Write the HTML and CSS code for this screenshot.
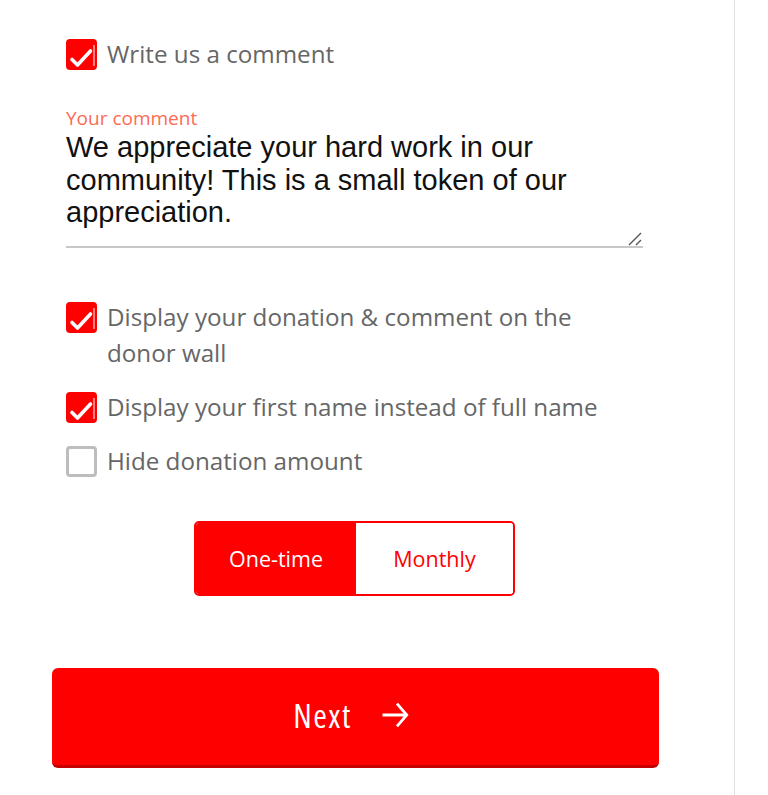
FILE: index.html
```html
<!DOCTYPE html>
<html>
<head>
<meta charset="utf-8">
<link rel="stylesheet" href="styles.css">
</head>
<body>
<div class="page">
  <div class="form">
    <label class="check-row first">
      <span class="box checked">
        <svg viewBox="0 0 30 30" width="30" height="30"><path d="M5 19.5 L10.5 25 L23.5 11" fill="none" stroke="#fff" stroke-width="3.6" stroke-linecap="round" stroke-linejoin="round"/><line x1="27" y1="5" x2="27" y2="26" stroke="#fff" stroke-width="1"/></svg>
      </span>
      <span class="text">Write us a comment</span>
    </label>

    <div class="comment">
      <div class="comment-label">Your comment</div>
      <div class="comment-field">
        <textarea class="comment-input">We appreciate your hard work in our community! This is a small token of our appreciation.</textarea>
        <svg class="grip" viewBox="0 0 16 16" width="16" height="16"><path d="M2 14 L14 2 M9 14 L14 9" fill="none" stroke="#555" stroke-width="1.4"/></svg>
      </div>
    </div>

    <div class="options">
      <label class="check-row">
        <span class="box checked">
          <svg viewBox="0 0 30 30" width="30" height="30"><path d="M5 19.5 L10.5 25 L23.5 11" fill="none" stroke="#fff" stroke-width="3.6" stroke-linecap="round" stroke-linejoin="round"/><line x1="27" y1="5" x2="27" y2="26" stroke="#fff" stroke-width="1"/></svg>
        </span>
        <span class="text">Display your donation &amp; comment on the donor wall</span>
      </label>
      <label class="check-row">
        <span class="box checked">
          <svg viewBox="0 0 30 30" width="30" height="30"><path d="M5 19.5 L10.5 25 L23.5 11" fill="none" stroke="#fff" stroke-width="3.6" stroke-linecap="round" stroke-linejoin="round"/><line x1="27" y1="5" x2="27" y2="26" stroke="#fff" stroke-width="1"/></svg>
        </span>
        <span class="text">Display your first name instead of full name</span>
      </label>
      <label class="check-row">
        <span class="box"></span>
        <span class="text">Hide donation amount</span>
      </label>
    </div>

    <div class="toggle-wrap">
      <div class="toggle">
        <button class="seg active">One-time</button>
        <button class="seg">Monthly</button>
      </div>
    </div>

    <button class="next">
      <span class="next-label">Next</span>
      <svg class="arrow" viewBox="0 0 30 30" width="30" height="30"><path d="M2 15 H26 M17 4 L26.5 15 L17 26" fill="none" stroke="#fff" stroke-width="3" stroke-linecap="square" stroke-linejoin="miter"/></svg>
    </button>
  </div>
</div>
</body>
</html>
```

FILE: styles.css
```css
* { box-sizing: border-box; }
html, body { margin: 0; padding: 0; background: #fff; }
body { width: 768px; height: 795px; overflow: hidden; }

.page {
  width: 735px;
  height: 795px;
  border-right: 1px solid #e2e2e2;
}

.form {
  width: 643px;
  padding: 36px 0 0 66px;
  font-family: "Open Sans", "Liberation Sans", sans-serif;
}

.check-row {
  display: flex;
  align-items: flex-start;
  gap: 10px;
  font-size: 24.2px;
  line-height: 36px;
  color: #666;
}

.box {
  flex: 0 0 31px;
  width: 31px;
  height: 31px;
  margin-top: 3px;
  border: 3px solid #bdbdbd;
  border-radius: 4px;
  background: #fff;
  display: flex;
  align-items: center;
  justify-content: center;
}
.box.checked {
  background: #ff0000;
  border: none;
}
.box svg { display: block; }

.text { flex: 1; }

.comment { margin-top: 35px; }
.comment-label {
  font-family: "Open Sans", "Liberation Sans", sans-serif;
  font-size: 19px;
  line-height: 22px;
  color: #ff6a55;
}
.comment-field {
  position: relative;
  width: 577px;
}
.comment-input {
  display: block;
  width: 577px;
  height: 119px;
  margin: 0;
  padding: 2px 0 0 0;
  border: none;
  border-bottom: 2px solid #c8c8c8;
  outline: none;
  resize: none;
  font-family: "Liberation Sans", Arial, sans-serif;
  font-size: 29px;
  line-height: 32.5px;
  color: #111;
  background: #fff;
}
.grip {
  position: absolute;
  right: 0;
  bottom: 1px;
  display: block;
}

.options {
  margin-top: 51px;
  display: flex;
  flex-direction: column;
  gap: 18px;
}

.toggle-wrap {
  width: 577px;
  display: flex;
  justify-content: center;
  margin-top: 42px;
}
.toggle {
  display: flex;
  width: 321px;
  height: 75px;
  border: 2px solid #ff0000;
  border-radius: 5px;
  overflow: hidden;
}
.seg {
  flex: 0 0 auto;
  border: none;
  margin: 0;
  padding: 0;
  font-family: "Open Sans", "Liberation Sans", sans-serif;
  font-size: 21.5px;
  background: #fff;
  color: #ff0000;
}
.seg.active {
  width: 160px;
  background: #ff0000;
  color: #fff;
  font-weight: 500;
  font-size: 21.5px;
}
.seg:not(.active) { flex: 1; }

.next {
  display: flex;
  align-items: center;
  justify-content: center;
  gap: 30px;
  margin: 72px 0 0 -14px;
  width: 607px;
  height: 100px;
  padding: 0 8px 3px 0;
  border: none;
  border-bottom: 3px solid #c40000;
  border-radius: 6px;
  background: #ff0000;
  color: #fff;
}
.next-label {
  font-family: "Open Sans", "Liberation Sans", sans-serif;
  font-stretch: 85%;
  font-weight: 500;
  font-size: 33px;
  letter-spacing: 1.5px;
}
.arrow { display: block; width: 28px; height: 30px; }
```
